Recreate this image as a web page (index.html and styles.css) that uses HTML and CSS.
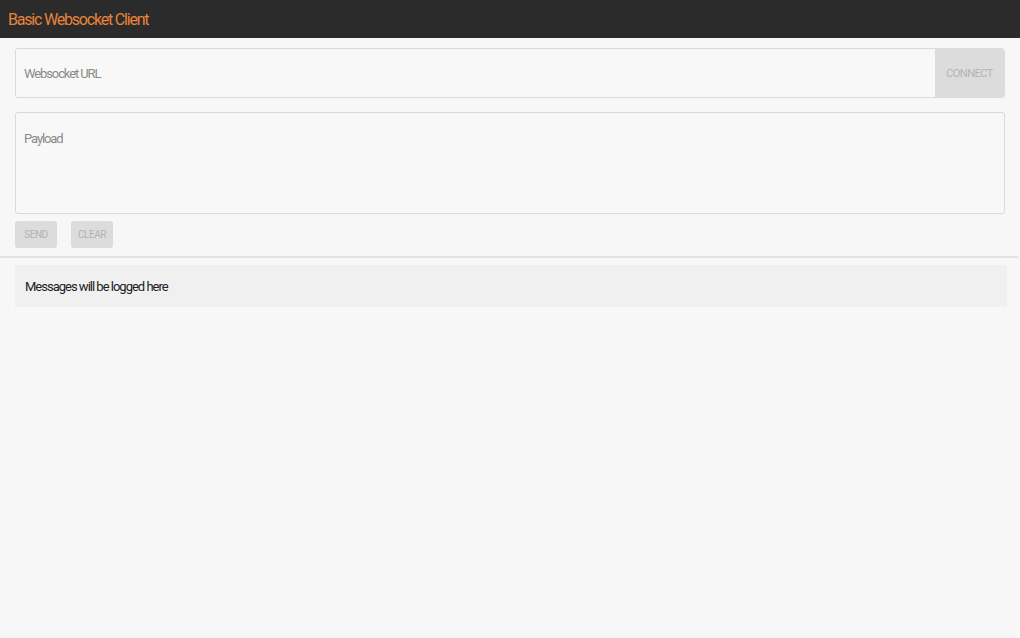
FILE: index.html
```html
<!DOCTYPE html>
<html lang="en">
<head>
  <meta charset="UTF-8">
  <title>Basic Websocket Client</title>
  <link rel="stylesheet" href="styles.css">
</head>
<body>
  <header class="topbar">
    <h1>Basic Websocket Client</h1>
  </header>

  <div class="controls">
    <div class="url-row">
      <input type="text" id="wsUrl" placeholder="Websocket URL">
      <button class="btn connect-btn" id="connectBtn" disabled>CONNECT</button>
    </div>

    <textarea id="payload" placeholder="Payload"></textarea>

    <div class="actions">
      <button class="btn small-btn" id="sendBtn" disabled>SEND</button>
      <button class="btn small-btn" id="clearBtn" disabled>CLEAR</button>
    </div>
  </div>

  <div class="log-area">
    <div class="log-item">Messages will be logged here</div>
  </div>
</body>
</html>
```

FILE: styles.css
```css
body {
    margin: 0;
    padding: 0;
    font-family: Roboto, "Liberation Sans", Arial, sans-serif;
    background: #f7f7f7;
    min-height: 100vh;
}

.topbar {
    background: #2b2b2b;
    height: 38px;
    display: flex;
    align-items: center;
    padding: 0 8px;
}

.topbar h1 {
    margin: 0;
    color: #e8833a;
    font-size: 16px;
    font-weight: normal;
    letter-spacing: -1.2px;
}

.controls {
    padding: 10px 13px 8px 15px;
    border-bottom: 2px solid #e2e2e2;
    margin-right: 2px;
}

.url-row {
    display: flex;
    height: 50px;
    border: 1px solid #dadada;
    border-radius: 3px;
    background: #f8f8f8;
    box-sizing: border-box;
    overflow: hidden;
}

input, textarea {
    font-family: Roboto, "Liberation Sans", Arial, sans-serif;
    font-size: 13px;
    letter-spacing: -1.1px;
    color: #333;
    background: #f8f8f8;
    outline: none;
}

input::placeholder, textarea::placeholder {
    color: #8a8a8a;
}

.url-row input {
    flex: 1;
    border: none;
    padding: 0 8px;
}

.btn {
    font-family: Roboto, "Liberation Sans", Arial, sans-serif;
    background: #dcdcdc;
    color: #b3b3b3;
    border: none;
    border-radius: 3px;
    letter-spacing: -0.5px;
    padding: 0;
}

.connect-btn {
    width: 69px;
    font-size: 11px;
    border-radius: 0 3px 3px 0;
}

textarea {
    display: block;
    width: 100%;
    height: 102px;
    margin-top: 14px;
    border: 1px solid #dadada;
    border-radius: 3px;
    padding: 18px 8px;
    box-sizing: border-box;
    resize: none;
}

.actions {
    display: flex;
    gap: 14px;
    margin-top: 7px;
}

.small-btn {
    width: 42px;
    height: 27px;
    font-size: 10px;
}

.log-area {
    padding: 7px 13px 7px 15px;
}

.log-item {
    background: #f0f0f0;
    height: 42px;
    display: flex;
    align-items: center;
    padding: 0 10px;
    font-size: 13px;
    letter-spacing: -1px;
    color: #222;
}
```
